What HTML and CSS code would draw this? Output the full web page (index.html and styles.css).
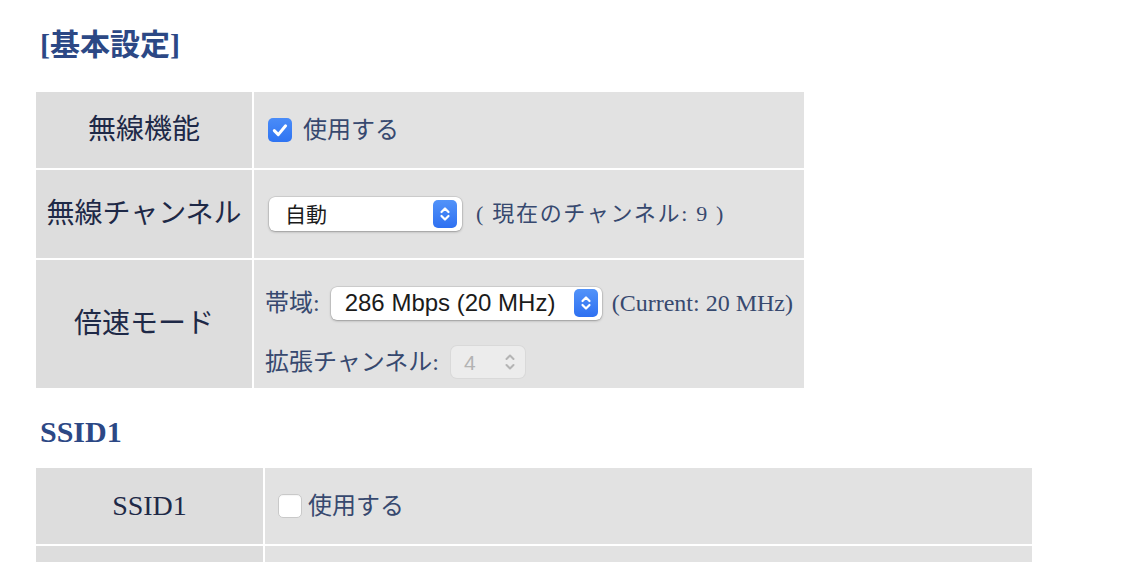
FILE: index.html
```html
<!DOCTYPE html>
<html lang="ja">
<head>
<meta charset="utf-8">
<title>基本設定</title>
<link rel="stylesheet" href="styles.css">
</head>
<body>
<div class="page">
  <h2 class="heading">[基本設定]</h2>
  <table class="settings t1">
    <tr class="h76">
      <th class="c1">無線機能</th>
      <td class="c2">
        <div class="line">
          <span class="box checked"><svg width="24" height="24" viewBox="0 0 24 24"><path d="M6.3 12.6 L10.3 16.6 L17.6 7.8" fill="none" stroke="#fff" stroke-width="3" stroke-linecap="round" stroke-linejoin="round"/></svg></span>
          <span class="val gap11">使用する</span>
        </div>
      </td>
    </tr>
    <tr class="h88">
      <th class="c1">無線チャンネル</th>
      <td class="c2">
        <div class="line">
          <div class="select sel-auto">
            <span class="sel-text jp">自動</span>
            <span class="stepper"><svg width="24" height="28" viewBox="0 0 24 28"><path d="M8.5 12 L12 8.5 L15.5 12 M8.5 16 L12 19.5 L15.5 16" fill="none" stroke="#fff" stroke-width="2.2" stroke-linecap="round" stroke-linejoin="round"/></svg></span>
          </div>
          <span class="note">( 現在のチャンネル: 9 )</span>
        </div>
      </td>
    </tr>
    <tr class="h128">
      <th class="c1">倍速モード</th>
      <td class="c2 top">
        <div class="line l1">
          <span class="val">帯域:</span>
          <div class="select sel-band">
            <span class="sel-text">286 Mbps (20 MHz)</span>
            <span class="stepper"><svg width="24" height="28" viewBox="0 0 24 28"><path d="M8.5 12 L12 8.5 L15.5 12 M8.5 16 L12 19.5 L15.5 16" fill="none" stroke="#fff" stroke-width="2.2" stroke-linecap="round" stroke-linejoin="round"/></svg></span>
          </div>
          <span class="val current">(Current: 20 MHz)</span>
        </div>
        <div class="line l2">
          <span class="val">拡張チャンネル:</span>
          <div class="select sel-ext disabled">
            <span class="sel-text">4</span>
            <span class="chev"><svg width="12" height="20" viewBox="0 0 12 20"><path d="M2.5 7 L6 3.5 L9.5 7 M2.5 13 L6 16.5 L9.5 13" fill="none" stroke="#b4b4b4" stroke-width="2" stroke-linecap="round" stroke-linejoin="round"/></svg></span>
          </div>
        </div>
      </td>
    </tr>
  </table>

  <h2 class="heading h-ssid">SSID1</h2>
  <table class="settings t2">
    <tr class="h76">
      <th class="c1w">SSID1</th>
      <td class="c2w">
        <div class="line">
          <span class="box unchecked"></span>
          <span class="val gap6">使用する</span>
        </div>
      </td>
    </tr>
    <tr class="h76">
      <th class="c1w"></th>
      <td class="c2w"></td>
    </tr>
  </table>
</div>
</body>
</html>
```

FILE: styles.css
```css
html, body {
  margin: 0;
  padding: 0;
  background: #ffffff;
  overflow: hidden;
}

.page {
  padding: 27px 0 0 34px;
}

.heading {
  margin: 0 0 27px 6px;
  font: bold 30px/36px "Liberation Serif", "Noto Sans CJK JP", serif;
  color: #2c4885;
}

.h-ssid {
  margin-top: 24px;
  margin-bottom: 16px;
}

table.settings {
  border-collapse: separate;
  border-spacing: 2px;
  table-layout: fixed;
}

.t1 { width: 772px; }
.t2 { width: 1000px; }

.settings th,
.settings td {
  box-sizing: border-box;
  vertical-align: middle;
}

.settings th {
  background: #dddddd;
  font: normal 28px/36px "Liberation Serif", "Noto Sans CJK JP", serif;
  color: #1e2947;
  text-align: center;
  padding: 0 6px;
}

.settings td {
  background: #e2e2e2;
  padding: 0 0 0 11px;
  font: normal 24px/32px "Liberation Serif", "Noto Sans CJK JP", serif;
  color: #37496f;
  text-align: left;
}

.c1 { width: 216px; }
.c1w { width: 227px; }

.h76 > th, .h76 > td { height: 76px; }
.h88 > th, .h88 > td { height: 88px; }
.h128 > th, .h128 > td { height: 128px; }

.settings td.top {
  vertical-align: top;
  padding-top: 26px;
}

.line {
  display: flex;
  align-items: center;
}

.l1 { height: 34px; }
.l2 { height: 32px; margin-top: 26px; }

.val { white-space: nowrap; }
.gap11 { margin-left: 11px; }
.gap6 { margin-left: 6px; }

.box {
  display: inline-flex;
  width: 24px;
  height: 24px;
  border-radius: 5px;
  box-sizing: border-box;
  flex: none;
}

.checked {
  margin-left: 3px;
  background: linear-gradient(#4a8cf8, #2f74f2);
}

.unchecked {
  margin-left: 2px;
  background: #ffffff;
  border: 1px solid #c9c9c9;
  box-shadow: inset 0 1px 1px rgba(0,0,0,0.04);
}

.select {
  display: flex;
  align-items: center;
  justify-content: space-between;
  box-sizing: border-box;
  background: #ffffff;
  border-radius: 6px;
  box-shadow: 0 0 0 0.5px rgba(0,0,0,0.14), 0 1px 2.5px rgba(0,0,0,0.28);
  flex: none;
}

.sel-text {
  font: normal 24px/1 "Liberation Sans", "Noto Sans CJK JP", sans-serif;
  color: #1b1b1b;
  white-space: nowrap;
}

.sel-text.jp {
  font-size: 21px;
}

.sel-auto {
  margin-left: 4px;
  width: 193px;
  height: 34px;
  padding: 0 5px 0 16px;
}

.sel-band {
  margin-left: 11px;
  width: 271px;
  height: 33px;
  padding: 0 4px 0 14px;
}

.sel-ext {
  margin-left: 12px;
  width: 74px;
  height: 32px;
  padding: 0 9px 0 13px;
}

.disabled {
  background: #ececec;
  box-shadow: 0 0 0 1px #d9d9d9;
}

.disabled .sel-text {
  color: #b3b3b3;
  font-size: 21px;
}

.stepper {
  display: inline-flex;
  width: 24px;
  height: 28px;
  border-radius: 5px;
  background: linear-gradient(#5293f9, #2e70f1);
}

.chev {
  display: inline-flex;
}

.note {
  margin-left: 14px;
  font-size: 22px;
  letter-spacing: 1.7px;
  white-space: nowrap;
}

.current {
  margin-left: 10px;
}
```
